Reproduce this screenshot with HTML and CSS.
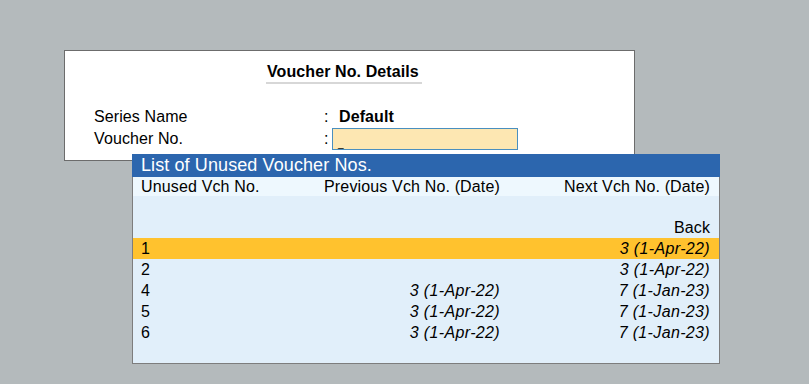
FILE: index.html
```html
<!DOCTYPE html>
<html>
<head>
<meta charset="utf-8">
<link rel="stylesheet" href="styles.css">
</head>
<body>
<div class="stage">
  <div class="details">
    <div class="title-wrap"><span class="title">Voucher No. Details</span></div>
    <div class="field">
      <span class="label">Series Name</span>
      <span class="colon">:</span>
      <span class="value strong">Default</span>
    </div>
    <div class="field">
      <span class="label">Voucher No.</span>
      <span class="colon">:</span>
      <span class="input"><span class="cursor">_</span></span>
    </div>
  </div>
  <div class="popup">
    <div class="popup-head">List of Unused Voucher Nos.</div>
    <div class="grid colhead">
      <span>Unused Vch No.</span>
      <span class="r">Previous Vch No. (Date)</span>
      <span class="r">Next Vch No. (Date)</span>
    </div>
    <div class="popup-body">
      <div class="grid row"><span></span><span></span><span></span></div>
      <div class="grid row"><span></span><span></span><span class="r">Back</span></div>
      <div class="grid row sel"><span>1</span><span></span><span class="r i">3 (1-Apr-22)</span></div>
      <div class="grid row"><span>2</span><span></span><span class="r i">3 (1-Apr-22)</span></div>
      <div class="grid row"><span>4</span><span class="r i">3 (1-Apr-22)</span><span class="r i">7 (1-Jan-23)</span></div>
      <div class="grid row"><span>5</span><span class="r i">3 (1-Apr-22)</span><span class="r i">7 (1-Jan-23)</span></div>
      <div class="grid row"><span>6</span><span class="r i">3 (1-Apr-22)</span><span class="r i">7 (1-Jan-23)</span></div>
    </div>
  </div>
</div>
</body>
</html>
```
FILE: styles.css
```css
html, body {
  margin: 0;
  padding: 0;
}
body {
  width: 809px;
  height: 384px;
  overflow: hidden;
  background: #b4babc;
  font-family: "Liberation Sans", Arial, sans-serif;
  font-size: 16px;
  letter-spacing: 0.1px;
  color: #000;
}
.stage {
  padding-top: 50px;
}
.details {
  box-sizing: border-box;
  margin-left: 64px;
  width: 571px;
  height: 111px;
  background: #fff;
  border: 1px solid #6c6c6c;
  padding-top: 11px;
}
.title-wrap {
  padding-left: 201px;
  height: 22px;
  margin-bottom: 22px;
}
.title {
  display: inline-block;
  font-weight: bold;
  line-height: 20px;
  padding: 0 3px 0 1px;
  border-bottom: 2px solid #d7d7d7;
}
.field {
  display: flex;
  align-items: center;
  height: 22px;
  line-height: 22px;
  padding-left: 29px;
}
.label {
  width: 230px;
}
.colon {
  width: 8px;
}
.value {
  padding-left: 7px;
}
.strong {
  font-weight: bold;
}
.input {
  box-sizing: border-box;
  width: 186px;
  height: 22px;
  line-height: 22px;
  background: #fde7b2;
  border: 1px solid #4a8fbf;
  padding-left: 5px;
}
.cursor {
  font-size: 10px;
  letter-spacing: 0;
  position: relative;
  top: 2px;
}
.popup {
  position: relative;
  box-sizing: border-box;
  margin-top: -7px;
  margin-left: 132px;
  width: 588px;
  height: 210px;
  background: #e1effa;
  border: 1px solid #7d7d7d;
  border-top: none;
}
.popup-head {
  background: #2c66ae;
  color: #fff;
  font-size: 18px;
  height: 23px;
  line-height: 23px;
  margin-left: -1px;
  margin-right: -1px;
  padding-left: 9px;
}
.grid {
  display: grid;
  grid-template-columns: 159px 200px 210px;
  padding-left: 8px;
}
.colhead {
  background: #eef8fe;
  height: 19px;
  line-height: 19px;
  letter-spacing: 0.15px;
}
.row {
  height: 21px;
  line-height: 21px;
}
.row.sel {
  background: #ffc22e;
}
.r {
  text-align: right;
}
.i {
  font-style: italic;
  letter-spacing: 0.35px;
}
```
